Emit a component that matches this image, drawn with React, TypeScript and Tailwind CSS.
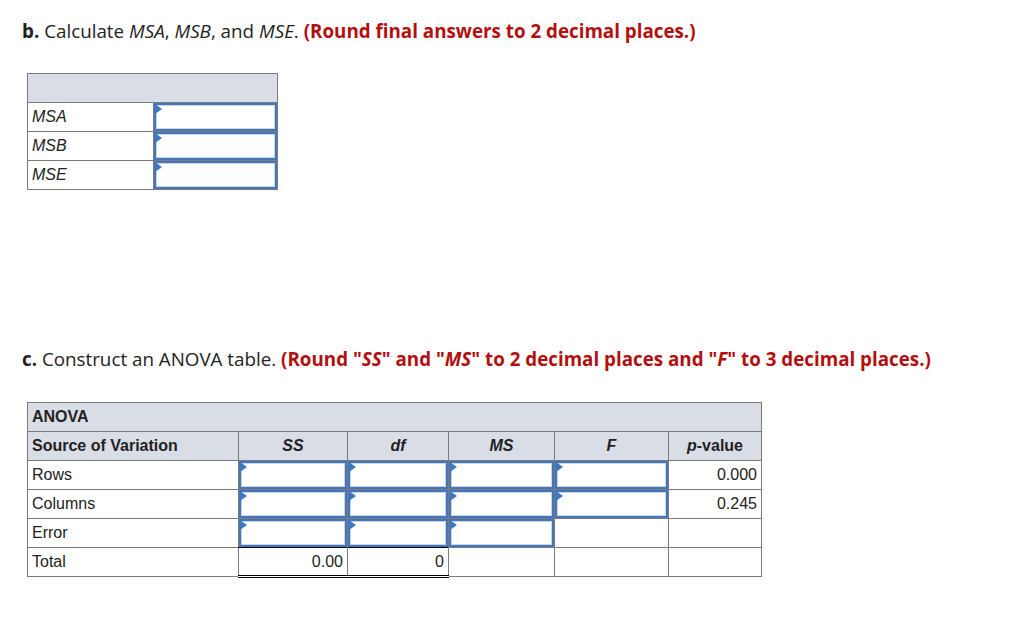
import React from "react";

const heading = { fontFamily: "'Open Sans', Lato, sans-serif" };
const cellFont = { fontFamily: "'Liberation Sans', Arial, sans-serif" };

const InputBox = () => (
  <div className="relative h-[28px] border-2 border-[#4676b8] bg-white shadow-[inset_0_0_0_1px_#c5d7ef]">
    <span className="absolute -left-[1px] -top-[1px] w-0 h-0 border-y-[5px] border-y-transparent border-l-[7px] border-l-[#3d78c3]" />
  </div>
);

const td = "border border-[#7b7b7b] text-[16px] text-[#222] h-[29px]";

function MsTable() {
  const rows = ["MSA", "MSB", "MSE"];
  return (
    <table className="border-collapse ml-[27px] mt-[30px]" style={cellFont}>
      <tbody>
        <tr>
          <td colSpan={2} className="border border-[#7b7b7b] bg-[#d9dde6] h-[29px]" />
        </tr>
        {rows.map((r) => (
          <tr key={r}>
            <td className={`${td} w-[126px] px-[4px] italic`}>{r}</td>
            <td className={`${td} w-[124px] p-0`}>
              <InputBox />
            </td>
          </tr>
        ))}
      </tbody>
    </table>
  );
}

function AnovaTable() {
  const body = [
    { label: "Rows", inputs: [true, true, true, true], p: "0.000" },
    { label: "Columns", inputs: [true, true, true, true], p: "0.245" },
    { label: "Error", inputs: [true, true, true, false], p: "" },
  ];
  const th = "border border-[#7b7b7b] bg-[#d9dde6] text-[16px] font-bold text-[#222] h-[29px]";
  return (
    <table className="border-collapse ml-[27px] mt-[31px]" style={cellFont}>
      <tbody>
        <tr>
          <td colSpan={6} className={`${th} text-left px-[4px]`}>ANOVA</td>
        </tr>
        <tr>
          <td className={`${th} w-[211px] text-left px-[4px]`}>Source of Variation</td>
          <td className={`${th} w-[109px] text-center italic`}>SS</td>
          <td className={`${th} w-[101px] text-center italic`}>df</td>
          <td className={`${th} w-[106px] text-center italic`}>MS</td>
          <td className={`${th} w-[114px] text-center italic`}>F</td>
          <td className={`${th} w-[93px] text-center`}>
            <i>p</i>-value
          </td>
        </tr>
        {body.map((r) => (
          <tr key={r.label}>
            <td className={`${td} px-[4px]`}>{r.label}</td>
            {r.inputs.map((on, i) => (
              <td key={i} className={`${td} p-0`}>
                {on ? <InputBox /> : null}
              </td>
            ))}
            <td className={`${td} text-right px-[4px]`}>{r.p}</td>
          </tr>
        ))}
        <tr>
          <td className={`${td} px-[4px]`}>Total</td>
          <td className={`${td} text-right px-[4px] border-t-black border-b-[3px] border-b-black border-double`}>0.00</td>
          <td className={`${td} text-right px-[4px] border-t-black border-b-[3px] border-b-black border-double`}>0</td>
          <td className={td} />
          <td className={td} />
          <td className={td} />
        </tr>
      </tbody>
    </table>
  );
}

export default function App() {
  return (
    <div className="w-[1012px] h-[635px] bg-white">
      <div className="pt-[19px] pl-[22px]">
        <p className="text-[18.8px] text-[#222] leading-[24px]" style={heading}>
          <b>b.</b> Calculate <i>MSA</i>, <i>MSB</i>, and <i>MSE</i>.{" "}
          <b className="text-[#b30f0f]">(Round final answers to 2 decimal places.)</b>
        </p>
      </div>
      <MsTable />
      <div className="pt-[157px] pl-[22px]">
        <p className="text-[18.8px] text-[#222] leading-[24px]" style={heading}>
          <b>c.</b> Construct an ANOVA table.{" "}
          <b className="text-[#b30f0f]">
            (Round "<i>SS</i>" and "<i>MS</i>" to 2 decimal places and "<i>F</i>" to 3 decimal places.)
          </b>
        </p>
      </div>
      <AnovaTable />
    </div>
  );
}
